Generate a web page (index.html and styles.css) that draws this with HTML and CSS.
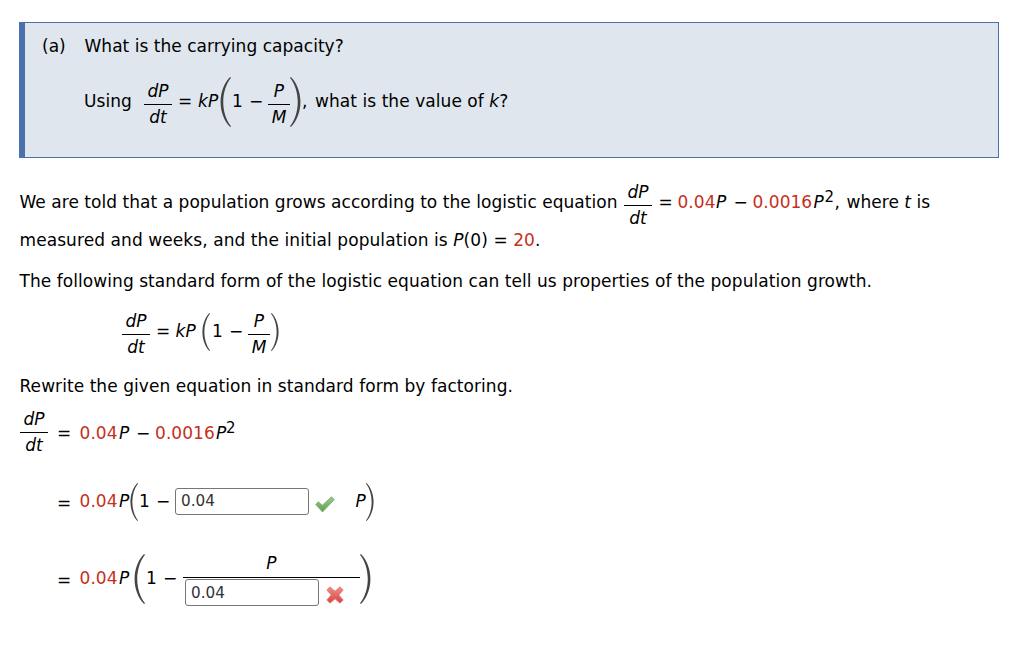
FILE: index.html
```html
<!DOCTYPE html>
<html lang="en">
<head>
    <meta charset="UTF-8">
    <meta name="viewport" content="width=device-width, initial-scale=1.0">
    <title>Logistic Equation</title>
    <link rel="stylesheet" href="styles.css">
</head>
<body>
    <svg class="defs" width="0" height="0">
        <symbol id="lparen" viewBox="0 0 12 50" preserveAspectRatio="none">
            <path d="M11 0C-2.8 13-2.8 37 11 50L12 49.3C.7 36 .7 14 12 .7Z"/>
        </symbol>
        <symbol id="rparen" viewBox="0 0 12 50" preserveAspectRatio="none">
            <path d="M1 0C14.8 13 14.8 37 1 50L0 49.3C11.3 36 11.3 14 0 .7Z"/>
        </symbol>
    </svg>

    <div class="question">
        <div class="row part">
            <span>(a)</span>
            <span>What is the carrying capacity?</span>
        </div>
        <div class="row math using">
            <span>Using</span>
            <span class="frac"><i>dP</i><i>dt</i></span>
            <span>=</span>
            <i>kP</i>
            <svg class="paren tall"><use href="#lparen"/></svg>
            <span>1</span>
            <span>−</span>
            <span class="frac"><i>P</i><i>M</i></span>
            <svg class="paren tall"><use href="#rparen"/></svg>
            <span>,</span>
            <span>what is the value of <i>k</i>?</span>
        </div>
    </div>

    <div class="row math told">
        <span>We are told that a population grows according to the logistic equation</span>
        <span class="frac"><i>dP</i><i>dt</i></span>
        <span>=</span>
        <span class="num">0.04</span>
        <i>P</i>
        <span>−</span>
        <span class="num">0.0016</span>
        <i>P</i>
        <span class="sup">2</span>
        <span>,</span>
        <span>where <i>t</i> is</span>
    </div>
    <div class="row initial">
        <span>measured and weeks, and the initial population is <i>P</i>(0) = <span class="num">20</span>.</span>
    </div>
    <div class="row following">
        <span>The following standard form of the logistic equation can tell us properties of the population growth.</span>
    </div>

    <div class="row math standard">
        <span class="frac"><i>dP</i><i>dt</i></span>
        <span>=</span>
        <i>kP</i>
        <svg class="paren short"><use href="#lparen"/></svg>
        <span>1</span>
        <span>−</span>
        <span class="frac"><i>P</i><i>M</i></span>
        <svg class="paren short"><use href="#rparen"/></svg>
    </div>

    <div class="row rewrite">
        <span>Rewrite the given equation in standard form by factoring.</span>
    </div>

    <div class="row math given">
        <span class="frac"><i>dP</i><i>dt</i></span>
        <span>=</span>
        <span class="num">0.04</span>
        <i>P</i>
        <span>−</span>
        <span class="num">0.0016</span>
        <i>P</i>
        <span class="sup">2</span>
    </div>

    <div class="row math step-one">
        <span class="low">=</span>
        <span class="num">0.04</span>
        <i>P</i>
        <svg class="paren short"><use href="#lparen"/></svg>
        <span>1</span>
        <span>−</span>
        <input class="answer" type="text" value="0.04">
        <svg class="mark check" viewBox="0 0 20 17">
            <defs>
                <linearGradient id="green" x1="0" y1="0" x2="0" y2="1">
                    <stop offset="0" stop-color="#9dcd8c"/>
                    <stop offset="1" stop-color="#5f9e4e"/>
                </linearGradient>
            </defs>
            <path d="M.7 8.4L3.4 5.8L7.3 9.3L16.5.8L19.3 3.6L7.5 16Z" fill="url(#green)" stroke="#79ac69" stroke-width=".8" stroke-linejoin="round"/>
        </svg>
        <i>P</i>
        <svg class="paren short"><use href="#rparen"/></svg>
    </div>

    <div class="row math step-two">
        <span class="low">=</span>
        <span class="num">0.04</span>
        <i>P</i>
        <svg class="paren tall"><use href="#lparen"/></svg>
        <span>1</span>
        <span>−</span>
        <div class="answer-frac">
            <i>P</i>
            <div class="under">
                <input class="answer" type="text" value="0.04">
                <svg class="mark cross" viewBox="0 0 18 18">
                    <defs>
                        <linearGradient id="red" x1="0" y1="0" x2="0" y2="1">
                            <stop offset="0" stop-color="#ee8f8a"/>
                            <stop offset="1" stop-color="#d4453e"/>
                        </linearGradient>
                    </defs>
                    <path d="M4 .8L9 5.2L14 .8L17.2 4L12.8 9L17.2 14L14 17.2L9 12.8L4 17.2L.8 14L5.2 9L.8 4Z" fill="url(#red)" stroke="#e37872" stroke-width=".8" stroke-linejoin="round"/>
                </svg>
            </div>
        </div>
        <svg class="paren tall"><use href="#rparen"/></svg>
    </div>
</body>
</html>
```
FILE: styles.css
```css
* {
    box-sizing: border-box;
}

body {
    margin: 0;
    padding: 22px 25px 0 19px;
    background-color: #fff;
    color: #000;
    font-family: Verdana, "DejaVu Sans", sans-serif;
    font-size: 17px;
    line-height: 24px;
    letter-spacing: 0.06px;
}

.defs {
    display: block;
}

.question {
    height: 136px;
    padding: 11px 0 0 17px;
    background-color: #dfe6ed;
    border: 1px solid #4a71ac;
    border-left-width: 6px;
}

.row {
    display: grid;
    align-items: center;
    height: 24px;
    white-space: nowrap;
}

.part {
    grid-template-columns: 42.5px 1fr;
    letter-spacing: 0.03px;
}

.math {
    height: 58px;
}

/* widths of the pieces of each equation */
.using {
    margin-top: 14px;
    padding-left: 42px;
    grid-template-columns: 60px 34px 20px 22px 12px 17px 19px 22px 12px 13px 1fr;
}

.told {
    margin-top: 15px;
    padding-left: 0.5px;
    letter-spacing: 0.04px;
    grid-template-columns: 604.5px 34.5px 19px 38.5px 17.5px 19px 61px 11px 10px 12px 1fr;
}

.initial {
    height: 18px;
    margin-top: -3px;
    padding-left: 0.5px;
    letter-spacing: 0.08px;
}

.following {
    margin-top: 23px;
    padding-left: 0.5px;
}

.standard {
    margin-top: 9px;
    padding-left: 103px;
    grid-template-columns: 34px 19.5px 26.5px 10px 17px 19px 23px 8px;
}

.rewrite {
    margin-top: 14px;
    padding-left: 0.5px;
}

.given {
    margin-top: 6px;
    padding-left: 1px;
    grid-template-columns: 37px 22.5px 39.5px 17px 19px 61px 10px 1fr;
}

.step-one {
    height: 50px;
    margin-top: 14px;
    padding-left: 38px;
    grid-template-columns: 22.5px 39.5px 11px 9px 17px 19px 139.5px 41px 10px 9px;
}

.step-two {
    height: 60px;
    margin-top: 22px;
    padding-left: 38px;
    grid-template-columns: 22.5px 39.5px 15px 12px 17px 20px 177px 12px;
}

i {
    font-style: italic;
}

.num {
    color: #c62f22;
}

.sup {
    font-size: 15px;
    padding-bottom: 11px;
}

.low {
    padding-top: 4px;
}

.frac {
    align-self: start;
    justify-self: start;
    display: flex;
    flex-direction: column;
    width: 28px;
    padding-top: 6px;
    text-align: center;
}

.frac i {
    height: 25px;
    line-height: 25px;
}

.frac i:first-child {
    height: 27px;
    line-height: 26px;
    border-bottom: 1px solid #000;
}

.paren ~ .frac {
    width: 22px;
}

.given .frac {
    padding-top: 2px;
}

.paren {
    display: block;
    margin-top: 2px;
    fill: #444;
}

.tall {
    width: 11px;
    height: 50px;
}

.short {
    width: 8px;
    height: 38px;
}

.answer {
    display: block;
    width: 134px;
    height: 27px;
    margin: 0;
    padding: 0 5px;
    border: 1px solid #767676;
    border-radius: 3px;
    background-color: #fff;
    color: #333;
    font-family: Verdana, "DejaVu Sans", sans-serif;
    font-size: 15.2px;
}

.mark {
    display: block;
}

.check {
    width: 20px;
    height: 17px;
    margin-top: 6px;
}

.cross {
    width: 18px;
    height: 18px;
    margin: 4px 0 0 7px;
}

.answer-frac {
    height: 60px;
    text-align: center;
}

.answer-frac > i {
    display: block;
    height: 30px;
    line-height: 30px;
    border-bottom: 1px solid #000;
}

.under {
    display: flex;
    align-items: center;
    padding: 1px 0 0 2px;
}
```
